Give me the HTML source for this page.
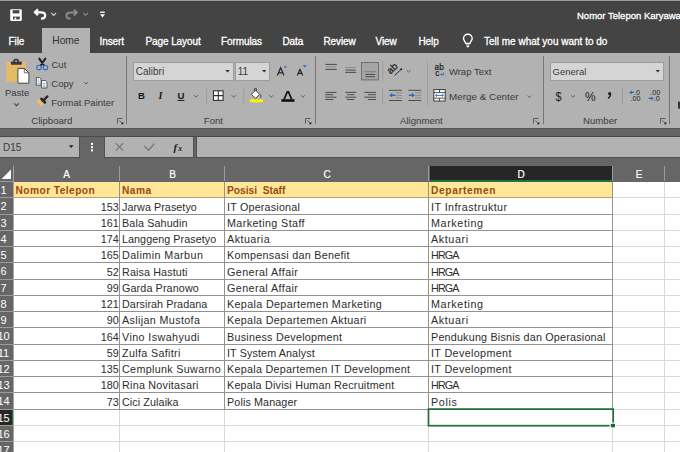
<!DOCTYPE html>
<html><head><meta charset="utf-8"><style>
html,body{margin:0;padding:0;width:680px;height:452px;overflow:hidden;background:#444;}
.r{position:absolute;}
.t{position:absolute;white-space:pre;line-height:1;font-family:"Liberation Sans", sans-serif;}
</style></head><body>
<div class="r" style="left:0px;top:0px;width:680px;height:52px;background:#444444;"></div><div class="r" style="left:0px;top:0px;width:680px;height:1px;background:#9c9c9c;"></div><div class="r" style="left:0px;top:1px;width:680px;height:1px;background:#3c3c3c;"></div><div class="t" style="left:577.00px;top:10.56px;font-size:9.5px;color:#ffffff;font-weight:400;-webkit-text-stroke:0.3px #fff;">Nomor Telepon Karyawan - Excel</div><div class="r" style="left:42px;top:28px;width:48px;height:25px;background:#b2b2b2;"></div><div class="t" style="left:8.50px;top:36.83px;font-size:10px;color:#ffffff;font-weight:400;letter-spacing:-0.1px;-webkit-text-stroke:0.3px #ffffff;">File</div><div class="t" style="left:52.30px;top:35.97px;font-size:10.2px;color:#333333;font-weight:400;">Home</div><div class="t" style="left:99.50px;top:36.83px;font-size:10px;color:#ffffff;font-weight:400;letter-spacing:-0.1px;-webkit-text-stroke:0.3px #ffffff;">Insert</div><div class="t" style="left:145.50px;top:36.83px;font-size:10px;color:#ffffff;font-weight:400;letter-spacing:-0.1px;-webkit-text-stroke:0.3px #ffffff;">Page Layout</div><div class="t" style="left:221.00px;top:36.83px;font-size:10px;color:#ffffff;font-weight:400;letter-spacing:-0.1px;-webkit-text-stroke:0.3px #ffffff;">Formulas</div><div class="t" style="left:282.50px;top:36.83px;font-size:10px;color:#ffffff;font-weight:400;letter-spacing:-0.1px;-webkit-text-stroke:0.3px #ffffff;">Data</div><div class="t" style="left:323.50px;top:36.83px;font-size:10px;color:#ffffff;font-weight:400;letter-spacing:-0.1px;-webkit-text-stroke:0.3px #ffffff;">Review</div><div class="t" style="left:375.50px;top:36.83px;font-size:10px;color:#ffffff;font-weight:400;letter-spacing:-0.1px;-webkit-text-stroke:0.3px #ffffff;">View</div><div class="t" style="left:418.50px;top:36.83px;font-size:10px;color:#ffffff;font-weight:400;letter-spacing:-0.1px;-webkit-text-stroke:0.3px #ffffff;">Help</div><div class="t" style="left:484.00px;top:36.83px;font-size:10px;color:#ffffff;font-weight:400;-webkit-text-stroke:0.3px #ffffff;">Tell me what you want to do</div><div class="r" style="left:0px;top:53px;width:680px;height:75px;background:#b2b2b2;"></div><div class="r" style="left:0px;top:128px;width:680px;height:1px;background:#575757;"></div><div class="r" style="left:0px;top:129px;width:680px;height:7px;background:#666666;"></div><div class="r" style="left:0px;top:136px;width:680px;height:1px;background:#4a4a4a;"></div><div class="r" style="left:126px;top:56px;width:1px;height:68px;background:#767676;"></div><div class="r" style="left:315px;top:56px;width:1px;height:68px;background:#767676;"></div><div class="r" style="left:543px;top:56px;width:1px;height:68px;background:#767676;"></div><div class="r" style="left:669px;top:56px;width:1px;height:68px;background:#767676;"></div><div class="t" style="left:31.30px;top:116.17px;font-size:9.6px;color:#3a3a3a;font-weight:400;">Clipboard</div><div class="t" style="left:203.80px;top:116.17px;font-size:9.6px;color:#3a3a3a;font-weight:400;">Font</div><div class="t" style="left:400.10px;top:116.17px;font-size:9.6px;color:#3a3a3a;font-weight:400;">Alignment</div><div class="t" style="left:583.10px;top:116.17px;font-size:9.6px;color:#3a3a3a;font-weight:400;">Number</div><div class="t" style="left:5.00px;top:87.96px;font-size:9.5px;color:#3a3a3a;font-weight:400;">Paste</div><div class="t" style="left:51.50px;top:60.16px;font-size:9.5px;color:#3a3a3a;font-weight:400;">Cut</div><div class="t" style="left:51.30px;top:79.46px;font-size:9.5px;color:#3a3a3a;font-weight:400;">Copy</div><div class="t" style="left:51.30px;top:97.86px;font-size:9.5px;color:#3a3a3a;font-weight:400;">Format Painter</div><div class="r" style="left:133px;top:62px;width:101px;height:19px;background:#d5d5d5;border:1px solid #9c9c9c;box-sizing:border-box;"></div><div class="t" style="left:135.80px;top:67.13px;font-size:10px;color:#3a3a3a;font-weight:400;">Calibri</div><div class="r" style="left:235px;top:62px;width:35px;height:19px;background:#d5d5d5;border:1px solid #9c9c9c;box-sizing:border-box;"></div><div class="t" style="left:237.80px;top:67.13px;font-size:10px;color:#3a3a3a;font-weight:400;">11</div><div class="r" style="left:550px;top:62px;width:114px;height:19px;background:#d5d5d5;border:1px solid #9c9c9c;box-sizing:border-box;"></div><div class="t" style="left:552.50px;top:67.16px;font-size:9.5px;color:#3a3a3a;font-weight:400;">General</div><div class="t" style="left:448.90px;top:66.76px;font-size:9.5px;color:#3a3a3a;font-weight:400;">Wrap Text</div><div class="t" style="left:449.10px;top:92.06px;font-size:9.85px;color:#3a3a3a;font-weight:400;">Merge &amp; Center</div><div class="r" style="left:0px;top:137px;width:680px;height:29px;background:#666666;"></div><div class="r" style="left:0px;top:137px;width:80px;height:21px;background:#b2b2b2;border-right:1px solid #505050;border-bottom:1px solid #505050;box-sizing:border-box;"></div><div class="t" style="left:3.00px;top:143.34px;font-size:10px;color:#3a3a3a;font-weight:400;">D15</div><div class="r" style="left:104px;top:137px;width:90px;height:21px;background:#b2b2b2;border:1px solid #505050;border-top:none;box-sizing:border-box;"></div><div class="r" style="left:196px;top:137px;width:484px;height:21px;background:#b2b2b2;border-left:1px solid #505050;border-bottom:1px solid #505050;box-sizing:border-box;"></div><div class="r" style="left:0px;top:166px;width:680px;height:16px;background:#666666;"></div><div class="r" style="left:430px;top:166px;width:183px;height:14px;background:#262626;"></div><div class="r" style="left:430px;top:180px;width:183px;height:2px;background:#217346;"></div><div class="r" style="left:13px;top:166px;width:1px;height:15px;background:#9b9b9b;"></div><div class="r" style="left:119px;top:166px;width:1px;height:15px;background:#9b9b9b;"></div><div class="r" style="left:224px;top:166px;width:1px;height:15px;background:#9b9b9b;"></div><div class="r" style="left:428px;top:166px;width:1px;height:15px;background:#9b9b9b;"></div><div class="r" style="left:612px;top:166px;width:1px;height:15px;background:#9b9b9b;"></div><div class="r" style="left:664px;top:166px;width:1px;height:15px;background:#9b9b9b;"></div><div class="t" style="left:56.5px;width:20px;text-align:center;top:168.5px;font-size:10px;color:#ffffff;line-height:12px;-webkit-text-stroke:0.2px #fff;">A</div><div class="t" style="left:162.5px;width:20px;text-align:center;top:168.5px;font-size:10px;color:#ffffff;line-height:12px;-webkit-text-stroke:0.2px #fff;">B</div><div class="t" style="left:317px;width:20px;text-align:center;top:168.5px;font-size:10px;color:#ffffff;line-height:12px;-webkit-text-stroke:0.2px #fff;">C</div><div class="t" style="left:511px;width:20px;text-align:center;top:168.5px;font-size:10px;color:#ffffff;line-height:12px;-webkit-text-stroke:0.2px #fff;">D</div><div class="t" style="left:629px;width:20px;text-align:center;top:168.5px;font-size:10px;color:#ffffff;line-height:12px;-webkit-text-stroke:0.2px #fff;">E</div><div class="r" style="left:0px;top:182px;width:680px;height:270px;background:#ffffff;"></div><div class="r" style="left:0px;top:182px;width:13px;height:270px;background:#666666;"></div><div class="r" style="left:13px;top:197px;width:667px;height:1px;background:#d9d9d9;"></div><div class="r" style="left:0px;top:197px;width:13px;height:1px;background:#9b9b9b;"></div><div class="r" style="left:13px;top:214px;width:667px;height:1px;background:#d9d9d9;"></div><div class="r" style="left:0px;top:214px;width:13px;height:1px;background:#9b9b9b;"></div><div class="r" style="left:13px;top:230px;width:667px;height:1px;background:#d9d9d9;"></div><div class="r" style="left:0px;top:230px;width:13px;height:1px;background:#9b9b9b;"></div><div class="r" style="left:13px;top:246px;width:667px;height:1px;background:#d9d9d9;"></div><div class="r" style="left:0px;top:246px;width:13px;height:1px;background:#9b9b9b;"></div><div class="r" style="left:13px;top:262px;width:667px;height:1px;background:#d9d9d9;"></div><div class="r" style="left:0px;top:262px;width:13px;height:1px;background:#9b9b9b;"></div><div class="r" style="left:13px;top:279px;width:667px;height:1px;background:#d9d9d9;"></div><div class="r" style="left:0px;top:279px;width:13px;height:1px;background:#9b9b9b;"></div><div class="r" style="left:13px;top:295px;width:667px;height:1px;background:#d9d9d9;"></div><div class="r" style="left:0px;top:295px;width:13px;height:1px;background:#9b9b9b;"></div><div class="r" style="left:13px;top:311px;width:667px;height:1px;background:#d9d9d9;"></div><div class="r" style="left:0px;top:311px;width:13px;height:1px;background:#9b9b9b;"></div><div class="r" style="left:13px;top:327px;width:667px;height:1px;background:#d9d9d9;"></div><div class="r" style="left:0px;top:327px;width:13px;height:1px;background:#9b9b9b;"></div><div class="r" style="left:13px;top:344px;width:667px;height:1px;background:#d9d9d9;"></div><div class="r" style="left:0px;top:344px;width:13px;height:1px;background:#9b9b9b;"></div><div class="r" style="left:13px;top:360px;width:667px;height:1px;background:#d9d9d9;"></div><div class="r" style="left:0px;top:360px;width:13px;height:1px;background:#9b9b9b;"></div><div class="r" style="left:13px;top:376px;width:667px;height:1px;background:#d9d9d9;"></div><div class="r" style="left:0px;top:376px;width:13px;height:1px;background:#9b9b9b;"></div><div class="r" style="left:13px;top:392px;width:667px;height:1px;background:#d9d9d9;"></div><div class="r" style="left:0px;top:392px;width:13px;height:1px;background:#9b9b9b;"></div><div class="r" style="left:13px;top:409px;width:667px;height:1px;background:#d9d9d9;"></div><div class="r" style="left:0px;top:409px;width:13px;height:1px;background:#9b9b9b;"></div><div class="r" style="left:13px;top:425px;width:667px;height:1px;background:#d9d9d9;"></div><div class="r" style="left:0px;top:425px;width:13px;height:1px;background:#9b9b9b;"></div><div class="r" style="left:13px;top:441px;width:667px;height:1px;background:#d9d9d9;"></div><div class="r" style="left:0px;top:441px;width:13px;height:1px;background:#9b9b9b;"></div><div class="r" style="left:119px;top:182px;width:1px;height:270px;background:#d9d9d9;"></div><div class="r" style="left:224px;top:182px;width:1px;height:270px;background:#d9d9d9;"></div><div class="r" style="left:428px;top:182px;width:1px;height:270px;background:#d9d9d9;"></div><div class="r" style="left:612px;top:182px;width:1px;height:270px;background:#d9d9d9;"></div><div class="r" style="left:664px;top:182px;width:1px;height:270px;background:#d9d9d9;"></div><div class="r" style="left:14px;top:182px;width:599px;height:15px;background:#ffe699;"></div><div class="r" style="left:13px;top:197px;width:600px;height:1px;background:#b3a36c;"></div><div class="r" style="left:13px;top:214px;width:600px;height:1px;background:#929292;"></div><div class="r" style="left:13px;top:230px;width:600px;height:1px;background:#929292;"></div><div class="r" style="left:13px;top:246px;width:600px;height:1px;background:#929292;"></div><div class="r" style="left:13px;top:262px;width:600px;height:1px;background:#929292;"></div><div class="r" style="left:13px;top:279px;width:600px;height:1px;background:#929292;"></div><div class="r" style="left:13px;top:295px;width:600px;height:1px;background:#929292;"></div><div class="r" style="left:13px;top:311px;width:600px;height:1px;background:#929292;"></div><div class="r" style="left:13px;top:327px;width:600px;height:1px;background:#929292;"></div><div class="r" style="left:13px;top:344px;width:600px;height:1px;background:#929292;"></div><div class="r" style="left:13px;top:360px;width:600px;height:1px;background:#929292;"></div><div class="r" style="left:13px;top:376px;width:600px;height:1px;background:#929292;"></div><div class="r" style="left:13px;top:392px;width:600px;height:1px;background:#929292;"></div><div class="r" style="left:13px;top:409px;width:600px;height:1px;background:#929292;"></div><div class="r" style="left:119px;top:182px;width:1px;height:228px;background:#929292;"></div><div class="r" style="left:224px;top:182px;width:1px;height:228px;background:#929292;"></div><div class="r" style="left:428px;top:182px;width:1px;height:228px;background:#929292;"></div><div class="r" style="left:612px;top:182px;width:1px;height:228px;background:#929292;"></div><div class="r" style="left:13px;top:166px;width:1px;height:286px;background:#a5a5a5;"></div><div class="r" style="left:0px;top:181px;width:13px;height:1px;background:#9b9b9b;"></div><div class="r" style="left:0px;top:410px;width:12px;height:15px;background:#262626;"></div><div class="r" style="left:12px;top:410px;width:1px;height:15px;background:#217346;"></div><div class="t" style="left:-6.5px;width:20px;text-align:center;top:183.6px;font-size:11px;color:#ffffff;line-height:13px;">1</div><div class="t" style="left:-6.5px;width:20px;text-align:center;top:199.6px;font-size:11px;color:#ffffff;line-height:13px;">2</div><div class="t" style="left:-6.5px;width:20px;text-align:center;top:216.6px;font-size:11px;color:#ffffff;line-height:13px;">3</div><div class="t" style="left:-6.5px;width:20px;text-align:center;top:232.6px;font-size:11px;color:#ffffff;line-height:13px;">4</div><div class="t" style="left:-6.5px;width:20px;text-align:center;top:248.6px;font-size:11px;color:#ffffff;line-height:13px;">5</div><div class="t" style="left:-6.5px;width:20px;text-align:center;top:264.6px;font-size:11px;color:#ffffff;line-height:13px;">6</div><div class="t" style="left:-6.5px;width:20px;text-align:center;top:281.6px;font-size:11px;color:#ffffff;line-height:13px;">7</div><div class="t" style="left:-6.5px;width:20px;text-align:center;top:297.6px;font-size:11px;color:#ffffff;line-height:13px;">8</div><div class="t" style="left:-6.5px;width:20px;text-align:center;top:313.6px;font-size:11px;color:#ffffff;line-height:13px;">9</div><div class="t" style="left:-6.5px;width:20px;text-align:center;top:329.6px;font-size:11px;color:#ffffff;line-height:13px;">10</div><div class="t" style="left:-6.5px;width:20px;text-align:center;top:346.6px;font-size:11px;color:#ffffff;line-height:13px;">11</div><div class="t" style="left:-6.5px;width:20px;text-align:center;top:362.6px;font-size:11px;color:#ffffff;line-height:13px;">12</div><div class="t" style="left:-6.5px;width:20px;text-align:center;top:378.6px;font-size:11px;color:#ffffff;line-height:13px;">13</div><div class="t" style="left:-6.5px;width:20px;text-align:center;top:394.6px;font-size:11px;color:#ffffff;line-height:13px;">14</div><div class="t" style="left:-6.5px;width:20px;text-align:center;top:411.6px;font-size:11px;color:#ffffff;line-height:13px;">15</div><div class="t" style="left:-6.5px;width:20px;text-align:center;top:427.6px;font-size:11px;color:#ffffff;line-height:13px;">16</div><div class="t" style="left:-6.5px;width:20px;text-align:center;top:443.6px;font-size:11px;color:#ffffff;line-height:13px;">17</div><div class="t" style="left:15.50px;top:185.97px;font-size:10.2px;color:#964a10;font-weight:700;letter-spacing:0.442px;">Nomor Telepon</div><div class="t" style="left:122.00px;top:185.97px;font-size:10.2px;color:#964a10;font-weight:700;letter-spacing:0.433px;">Nama</div><div class="t" style="left:227.00px;top:185.97px;font-size:10.2px;color:#964a10;font-weight:700;letter-spacing:0.008px;">Posisi&nbsp; Staff</div><div class="t" style="left:431.00px;top:185.97px;font-size:10.2px;color:#964a10;font-weight:700;letter-spacing:0.633px;">Departemen</div><div class="t" style="left:61px;width:57.8px;text-align:right;top:202.29px;font-size:10.75px;color:#2c2c2c;">153</div><div class="t" style="left:122.00px;top:202.30px;font-size:10.75px;color:#2c2c2c;font-weight:400;letter-spacing:0.054px;">Jarwa Prasetyo</div><div class="t" style="left:227.00px;top:202.30px;font-size:10.75px;color:#2c2c2c;font-weight:400;letter-spacing:0.192px;">IT Operasional</div><div class="t" style="left:431.00px;top:202.30px;font-size:10.75px;color:#2c2c2c;font-weight:400;letter-spacing:0.427px;">IT Infrastruktur</div><div class="t" style="left:61px;width:57.8px;text-align:right;top:218.29px;font-size:10.75px;color:#2c2c2c;">161</div><div class="t" style="left:122.00px;top:218.30px;font-size:10.75px;color:#2c2c2c;font-weight:400;letter-spacing:0.136px;">Bala Sahudin</div><div class="t" style="left:227.00px;top:218.30px;font-size:10.75px;color:#2c2c2c;font-weight:400;letter-spacing:0.393px;">Marketing Staff</div><div class="t" style="left:431.00px;top:218.30px;font-size:10.75px;color:#2c2c2c;font-weight:400;letter-spacing:0.612px;">Marketing</div><div class="t" style="left:61px;width:57.8px;text-align:right;top:234.29px;font-size:10.75px;color:#2c2c2c;">174</div><div class="t" style="left:122.00px;top:234.30px;font-size:10.75px;color:#2c2c2c;font-weight:400;letter-spacing:0.056px;">Langgeng Prasetyo</div><div class="t" style="left:227.00px;top:234.30px;font-size:10.75px;color:#2c2c2c;font-weight:400;letter-spacing:0.457px;">Aktuaria</div><div class="t" style="left:431.00px;top:234.30px;font-size:10.75px;color:#2c2c2c;font-weight:400;letter-spacing:0.6px;">Aktuari</div><div class="t" style="left:61px;width:57.8px;text-align:right;top:250.29px;font-size:10.75px;color:#2c2c2c;">165</div><div class="t" style="left:122.00px;top:250.30px;font-size:10.75px;color:#2c2c2c;font-weight:400;letter-spacing:0.431px;">Dalimin Marbun</div><div class="t" style="left:227.00px;top:250.30px;font-size:10.75px;color:#2c2c2c;font-weight:400;letter-spacing:0.281px;">Kompensasi dan Benefit</div><div class="t" style="left:431.00px;top:250.30px;font-size:10.75px;color:#2c2c2c;font-weight:400;letter-spacing:-0.867px;">HRGA</div><div class="t" style="left:61px;width:57.8px;text-align:right;top:267.29px;font-size:10.75px;color:#2c2c2c;">52</div><div class="t" style="left:122.00px;top:267.30px;font-size:10.75px;color:#2c2c2c;font-weight:400;letter-spacing:0.125px;">Raisa Hastuti</div><div class="t" style="left:227.00px;top:267.30px;font-size:10.75px;color:#2c2c2c;font-weight:400;letter-spacing:0.415px;">General Affair</div><div class="t" style="left:431.00px;top:267.30px;font-size:10.75px;color:#2c2c2c;font-weight:400;letter-spacing:-0.867px;">HRGA</div><div class="t" style="left:61px;width:57.8px;text-align:right;top:283.29px;font-size:10.75px;color:#2c2c2c;">99</div><div class="t" style="left:122.00px;top:283.30px;font-size:10.75px;color:#2c2c2c;font-weight:400;letter-spacing:0.125px;">Garda Pranowo</div><div class="t" style="left:227.00px;top:283.30px;font-size:10.75px;color:#2c2c2c;font-weight:400;letter-spacing:0.415px;">General Affair</div><div class="t" style="left:431.00px;top:283.30px;font-size:10.75px;color:#2c2c2c;font-weight:400;letter-spacing:-0.867px;">HRGA</div><div class="t" style="left:61px;width:57.8px;text-align:right;top:299.29px;font-size:10.75px;color:#2c2c2c;">121</div><div class="t" style="left:122.00px;top:299.30px;font-size:10.75px;color:#2c2c2c;font-weight:400;letter-spacing:0.067px;">Darsirah Pradana</div><div class="t" style="left:227.00px;top:299.30px;font-size:10.75px;color:#2c2c2c;font-weight:400;letter-spacing:0.346px;">Kepala Departemen Marketing</div><div class="t" style="left:431.00px;top:299.30px;font-size:10.75px;color:#2c2c2c;font-weight:400;letter-spacing:0.612px;">Marketing</div><div class="t" style="left:61px;width:57.8px;text-align:right;top:315.29px;font-size:10.75px;color:#2c2c2c;">90</div><div class="t" style="left:122.00px;top:315.30px;font-size:10.75px;color:#2c2c2c;font-weight:400;letter-spacing:0.357px;">Aslijan Mustofa</div><div class="t" style="left:227.00px;top:315.30px;font-size:10.75px;color:#2c2c2c;font-weight:400;letter-spacing:0.321px;">Kepala Departemen Aktuari</div><div class="t" style="left:431.00px;top:315.30px;font-size:10.75px;color:#2c2c2c;font-weight:400;letter-spacing:0.6px;">Aktuari</div><div class="t" style="left:61px;width:57.8px;text-align:right;top:332.29px;font-size:10.75px;color:#2c2c2c;">164</div><div class="t" style="left:122.00px;top:332.30px;font-size:10.75px;color:#2c2c2c;font-weight:400;letter-spacing:0.408px;">Vino Iswahyudi</div><div class="t" style="left:227.00px;top:332.30px;font-size:10.75px;color:#2c2c2c;font-weight:400;letter-spacing:0.268px;">Business Development</div><div class="t" style="left:431.00px;top:332.30px;font-size:10.75px;color:#2c2c2c;font-weight:400;letter-spacing:0.206px;">Pendukung Bisnis dan Operasional</div><div class="t" style="left:61px;width:57.8px;text-align:right;top:348.29px;font-size:10.75px;color:#2c2c2c;">59</div><div class="t" style="left:122.00px;top:348.30px;font-size:10.75px;color:#2c2c2c;font-weight:400;letter-spacing:0.333px;">Zulfa Safitri</div><div class="t" style="left:227.00px;top:348.30px;font-size:10.75px;color:#2c2c2c;font-weight:400;letter-spacing:0.113px;">IT System Analyst</div><div class="t" style="left:431.00px;top:348.30px;font-size:10.75px;color:#2c2c2c;font-weight:400;letter-spacing:0.362px;">IT Development</div><div class="t" style="left:61px;width:57.8px;text-align:right;top:364.29px;font-size:10.75px;color:#2c2c2c;">135</div><div class="t" style="left:122.00px;top:364.30px;font-size:10.75px;color:#2c2c2c;font-weight:400;letter-spacing:0.32px;">Cemplunk Suwarno</div><div class="t" style="left:227.00px;top:364.30px;font-size:10.75px;color:#2c2c2c;font-weight:400;letter-spacing:0.284px;">Kepala Departemen IT Development</div><div class="t" style="left:431.00px;top:364.30px;font-size:10.75px;color:#2c2c2c;font-weight:400;letter-spacing:0.362px;">IT Development</div><div class="t" style="left:61px;width:57.8px;text-align:right;top:380.29px;font-size:10.75px;color:#2c2c2c;">180</div><div class="t" style="left:122.00px;top:380.30px;font-size:10.75px;color:#2c2c2c;font-weight:400;letter-spacing:0.25px;">Rina Novitasari</div><div class="t" style="left:227.00px;top:380.30px;font-size:10.75px;color:#2c2c2c;font-weight:400;letter-spacing:0.217px;">Kepala Divisi Human Recruitment</div><div class="t" style="left:431.00px;top:380.30px;font-size:10.75px;color:#2c2c2c;font-weight:400;letter-spacing:-0.867px;">HRGA</div><div class="t" style="left:61px;width:57.8px;text-align:right;top:397.29px;font-size:10.75px;color:#2c2c2c;">73</div><div class="t" style="left:122.00px;top:397.30px;font-size:10.75px;color:#2c2c2c;font-weight:400;letter-spacing:0.091px;">Cici Zulaika</div><div class="t" style="left:227.00px;top:397.30px;font-size:10.75px;color:#2c2c2c;font-weight:400;letter-spacing:0.117px;">Polis Manager</div><div class="t" style="left:431.00px;top:397.30px;font-size:10.75px;color:#2c2c2c;font-weight:400;letter-spacing:0.625px;">Polis</div>
<svg width="680" height="452" style="position:absolute;left:0;top:0"><rect x="10.2" y="9.2" width="11.6" height="11.8" rx="1.2" fill="#fff"/><rect x="12.6" y="10.2" width="6.8" height="3.2" fill="#444"/><rect x="13" y="16.6" width="6.8" height="2.8" fill="#444"/><rect x="14.6" y="17.6" width="1.6" height="2" fill="#fff"/><path d="M35 12.3 H40.8 C43.6 12.3 45.2 13.8 45.2 15.5 C45.2 17.3 43.4 18.6 41 18.6" fill="none" stroke="#fff" stroke-width="2.3" /><path d="M38 9.4 L35 12.3 L38 15.2" fill="none" stroke="#fff" stroke-width="2.3"/><path d="M51.3 13 L53.7 15.4 L56.1 13" fill="none" stroke="#d0d0d0" stroke-width="1.1"/><path d="M77 12.6 H71 C68.2 12.6 66.4 14 66.4 15.7 C66.4 17.5 68.2 18.6 70.6 18.6" fill="none" stroke="#8a8a8a" stroke-width="2"/><path d="M73.8 9.6 L76.8 12.6 L73.8 15.4" fill="none" stroke="#8a8a8a" stroke-width="2"/><path d="M83.3 13 L85.6 15.3 L87.9 13" fill="none" stroke="#8c8c8c" stroke-width="1.1"/><rect x="100.2" y="11.6" width="4.6" height="1.3" fill="#fff"/><path d="M100 14.2 H105 L102.5 17.6 Z" fill="#fff"/><path d="M465.6 43.4 C465.4 41.4 463.5 40.2 463.5 38.6 A4.35 4.35 0 0 1 472.2 38.6 C472.2 40.2 470.2 41.4 470 43.4 Z" fill="none" stroke="#fff" stroke-width="1.4"/><path d="M466 45 H469.6 M466.6 46.6 H469" stroke="#fff" stroke-width="1.2"/><rect x="6.4" y="62" width="19.3" height="19.8" fill="#e7bb66"/><rect x="10.9" y="61.4" width="10.9" height="3.4" rx="0.8" fill="#3a3a3a"/><path d="M13.4 62 V60.6 Q13.4 58.8 15.2 58.8 H17 Q18.8 58.8 18.8 60.6 V62 Z" fill="#3a3a3a"/><rect x="15.3" y="60.4" width="1.6" height="1.5" fill="#bdbdbd"/><path d="M17.9 68.4 H24.3 L28.9 72.8 V83.2 H17.9 Z" fill="#fff" stroke="#454545" stroke-width="1"/><path d="M24.3 68.4 V72.8 H28.9" fill="none" stroke="#454545" stroke-width="0.8"/><path d="M14.4 103.4 L16.6 105.6 L18.8 103.4" fill="none" stroke="#444" stroke-width="1.1"/><path d="M39.3 58.6 L43.8 65.2 M45.3 58.6 L40.8 65.2" stroke="#222" stroke-width="2" stroke-linecap="round"/><circle cx="39" cy="67.6" r="2.3" fill="none" stroke="#3b6fb4" stroke-width="1.1"/><circle cx="45.4" cy="67.6" r="2.3" fill="none" stroke="#3b6fb4" stroke-width="1.1"/><path d="M36.3 77.7 H39.6 L41 79.1 V85.2 H36.3 Z" fill="#fff" stroke="#4a4a4a" stroke-width="0.9"/><path d="M41.6 80.5 H45.3 L47 82.2 V88 H41.6 Z" fill="#fff" stroke="#4a4a4a" stroke-width="0.9"/><path d="M37.6 80 H39.2 M37.6 81.8 H39.5 M37.6 83.5 H39.5 M43 83.5 H45.5 M43 85.2 H45.5 M43 86.8 H45.5" stroke="#5b86c4" stroke-width="0.7"/><path d="M84.4 82.2 L86.2 84 L88 82.2" fill="none" stroke="#444" stroke-width="0.9"/><path d="M36.4 101.3 L39.4 99.2 L44.2 103.6 L41.2 106.8 Z" fill="#efbd63"/><path d="M41.6 99 L44.8 102.2" stroke="#2a2a2a" stroke-width="3" stroke-linecap="round"/><path d="M44.2 99.6 L47.4 96.4" stroke="#2a2a2a" stroke-width="2.2" stroke-linecap="round"/><path d="M117.5 123.5 V118.5 H122.5" fill="none" stroke="#5a5a5a" stroke-width="1"/><path d="M119.3 120.3 L122.7 123.7" fill="none" stroke="#555" stroke-width="0.9"/><path d="M123.3 121.7 V124.3 H120.7 Z" fill="#222"/><path d="M305.5 123.5 V118.5 H310.5" fill="none" stroke="#5a5a5a" stroke-width="1"/><path d="M307.3 120.3 L310.7 123.7" fill="none" stroke="#555" stroke-width="0.9"/><path d="M311.3 121.7 V124.3 H308.7 Z" fill="#222"/><path d="M533.5 123.5 V118.5 H538.5" fill="none" stroke="#5a5a5a" stroke-width="1"/><path d="M535.3 120.3 L538.7 123.7" fill="none" stroke="#555" stroke-width="0.9"/><path d="M539.3 121.7 V124.3 H536.7 Z" fill="#222"/><path d="M660.5 123.5 V118.5 H665.5" fill="none" stroke="#5a5a5a" stroke-width="1"/><path d="M662.3 120.3 L665.7 123.7" fill="none" stroke="#555" stroke-width="0.9"/><path d="M666.3 121.7 V124.3 H663.7 Z" fill="#222"/><path d="M225.4 70 H229.79999999999998 L227.6 72.4 Z" fill="#333"/><path d="M262.0 70 H266.4 L264.2 72.4 Z" fill="#333"/><path d="M277.3 75.6 L280.6 67.8 L284 75.6 M278.5 72.8 H282.8" fill="none" stroke="#222" stroke-width="1.2"/><path d="M283.6 67.4 L285.2 65.6 L286.8 67.4 Z" fill="#2b6bc0"/><path d="M297.2 75.6 L300 69.4 L302.8 75.6 M298.2 73.4 H301.8" fill="none" stroke="#222" stroke-width="1.1"/><path d="M302.6 65.2 H307 L304.8 67.6 Z" fill="#2b6bc0"/><text x="138" y="99.2" font-family="Liberation Sans" font-weight="700" font-size="9.6" fill="#1a1a1a">B</text><text x="158.4" y="99.2" font-family="Liberation Serif" font-style="italic" font-weight="700" font-size="10.2" fill="#1a1a1a">I</text><text x="177.4" y="99" font-family="Liberation Sans" font-weight="700" font-size="9.6" fill="#1a1a1a">U</text><rect x="177.6" y="100" width="6.8" height="1" fill="#222"/><path d="M194.2 95.2 L196.2 97.2 L198.2 95.2" fill="none" stroke="#555" stroke-width="0.9"/><path d="M231.6 95.2 L233.6 97.2 L235.6 95.2" fill="none" stroke="#555" stroke-width="0.9"/><path d="M269.2 95.2 L271.2 97.2 L273.2 95.2" fill="none" stroke="#555" stroke-width="0.9"/><path d="M301 95.2 L303 97.2 L305 95.2" fill="none" stroke="#555" stroke-width="0.9"/><rect x="206.3" y="88.6" width="0.9" height="16" fill="#9a9a9a"/><rect x="243.3" y="88.6" width="0.9" height="16" fill="#9a9a9a"/><rect x="213.5" y="90.8" width="9.6" height="9.6" fill="#fff" stroke="#333" stroke-width="1.1"/><path d="M218.3 90.8 V100.4 M213.5 95.6 H223.1" stroke="#333" stroke-width="1.1"/><path d="M251.4 94.3 L255.5 90.2 L259.6 94.3 L255.5 98.4 Z" fill="#fff" stroke="#333" stroke-width="0.9"/><path d="M254.5 91.2 V88.6 H256.4 V91" fill="none" stroke="#333" stroke-width="0.8"/><path d="M260.2 93.4 Q262.8 95.6 260.4 98.6 Z" fill="#2466c0"/><rect x="249.8" y="99.3" width="13.2" height="3" fill="#fff200"/><path d="M283.2 99.2 L286.8 91 H289 L292.6 99.2 H290.8 L287.9 92.8 L285 99.2 Z" fill="#111"/><rect x="281.4" y="99.2" width="13.1" height="2.6" fill="#111"/><rect x="325.4" y="63.90" width="11.40" height="1" fill="#4a4a4a"/><rect x="325.4" y="68.90" width="11.40" height="1" fill="#4a4a4a"/><rect x="326" y="66.40" width="10.20" height="1" fill="#8a8a8a"/><rect x="345.2" y="67.10" width="11.00" height="1" fill="#8a8a8a"/><rect x="345.6" y="69.60" width="10.00" height="1" fill="#4a4a4a"/><rect x="345.2" y="71.90" width="11.00" height="1" fill="#4a4a4a"/><rect x="361.5" y="62.5" width="17" height="17.4" fill="#a5a5a5" stroke="#6e6e6e" stroke-width="1"/><rect x="364.6" y="71.20" width="11.20" height="1" fill="#7a7a7a"/><rect x="365.4" y="73.90" width="9.60" height="1" fill="#4a4a4a"/><rect x="365.4" y="76.20" width="9.60" height="1" fill="#4a4a4a"/><rect x="382.3" y="61" width="0.9" height="19.6" fill="#9a9a9a"/><rect x="325.2" y="91.90" width="11.40" height="1" fill="#4d4d4d"/><rect x="345.2" y="91.90" width="11.00" height="1" fill="#4d4d4d"/><rect x="364.4" y="91.90" width="11.60" height="1" fill="#4d4d4d"/><rect x="325.2" y="94.20" width="8.00" height="1" fill="#4d4d4d"/><rect x="347" y="94.20" width="7.20" height="1" fill="#4d4d4d"/><rect x="368" y="94.20" width="8.00" height="1" fill="#4d4d4d"/><rect x="325.2" y="96.70" width="11.40" height="1" fill="#4d4d4d"/><rect x="345.2" y="96.70" width="11.00" height="1" fill="#4d4d4d"/><rect x="364.4" y="96.70" width="11.60" height="1" fill="#4d4d4d"/><rect x="325.2" y="99.00" width="8.00" height="1" fill="#4d4d4d"/><rect x="347" y="99.00" width="7.20" height="1" fill="#4d4d4d"/><rect x="368" y="99.00" width="8.00" height="1" fill="#4d4d4d"/><rect x="382.3" y="88.2" width="0.9" height="16.2" fill="#9a9a9a"/><text x="0" y="0" transform="translate(390.6 74.6) rotate(-45)" font-family="Liberation Sans" font-size="9.8" fill="#1e1e1e" stroke="#1e1e1e" stroke-width="0.25">ab</text><path d="M394.6 75.6 L401 69.4" stroke="#222" stroke-width="1"/><circle cx="401.2" cy="69.2" r="1" fill="#222"/><path d="M406.6 70.2 L408.5 72 L410.4 70.2" fill="none" stroke="#555" stroke-width="0.9"/><rect x="389" y="89.8" width="12.8" height="1" fill="#4d4d4d"/><rect x="389" y="100" width="12.8" height="1" fill="#4d4d4d"/><rect x="395.6" y="92.4" width="6.2" height="1" fill="#8c8c8c"/><rect x="395.6" y="94.9" width="6.2" height="1" fill="#8c8c8c"/><rect x="395.6" y="97.4" width="6.2" height="1" fill="#8c8c8c"/><path d="M389.4 95.3 L392.2 93 V94.6 H395.2 V96 H392.2 V97.6 Z" fill="#2466c0"/><rect x="408.4" y="89.8" width="12.8" height="1" fill="#4d4d4d"/><rect x="408.4" y="100" width="12.8" height="1" fill="#4d4d4d"/><rect x="415.0" y="92.4" width="6.2" height="1" fill="#8c8c8c"/><rect x="415.0" y="94.9" width="6.2" height="1" fill="#8c8c8c"/><rect x="415.0" y="97.4" width="6.2" height="1" fill="#8c8c8c"/><path d="M414.79999999999995 95.3 L412.0 93 V94.6 H408.79999999999995 V96 H412.0 V97.6 Z" fill="#2466c0"/><rect x="427" y="61.2" width="0.9" height="44" fill="#9a9a9a"/><text x="434.6" y="70" font-family="Liberation Sans" font-size="8.2" fill="#1e1e1e" stroke="#1e1e1e" stroke-width="0.2">ab</text><text x="435.2" y="75.8" font-family="Liberation Sans" font-size="8.2" fill="#1e1e1e" stroke="#1e1e1e" stroke-width="0.2">c</text><path d="M443.6 72.6 V74.6 H440.8 M441.8 73.6 L440.8 74.6 L441.8 75.6" fill="none" stroke="#2466c0" stroke-width="0.9"/><rect x="433.8" y="89.6" width="11.4" height="11.4" fill="#fff" stroke="#3a3a3a" stroke-width="1"/><path d="M433.8 92.6 H445.2 M433.8 98.2 H445.2 M439.5 89.6 V92.6 M439.5 98.2 V101" stroke="#3a3a3a" stroke-width="0.9"/><path d="M435.6 95.4 H443.4" stroke="#2466c0" stroke-width="0.9"/><path d="M437 94.2 L435.6 95.4 L437 96.6 M442 94.2 L443.4 95.4 L442 96.6" fill="none" stroke="#2466c0" stroke-width="0.9"/><path d="M527.6 95.6 L529.5 97.4 L531.4 95.6" fill="none" stroke="#555" stroke-width="0.9"/><path d="M655.6 70 H660 L657.8 72.4 Z" fill="#333"/><text x="0" y="0" transform="translate(555.6 100.8) scale(0.82 1)" font-family="Liberation Sans" font-size="13.4" fill="#222">$</text><path d="M571 95.4 L573 97.2 L575 95.4" fill="none" stroke="#555" stroke-width="0.9"/><text x="585" y="100.6" font-family="Liberation Sans" font-size="12" fill="#222">%</text><circle cx="609.6" cy="93.6" r="1.6" fill="#222"/><path d="M610.6 93.8 Q610.8 96.6 608 98.4" fill="none" stroke="#222" stroke-width="1.3"/><rect x="622" y="88" width="0.9" height="16.4" fill="#9a9a9a"/><text x="634" y="95.2" font-family="Liberation Sans" font-size="7.2" fill="#222">.0</text><text x="630.6" y="101.2" font-family="Liberation Sans" font-size="7.2" fill="#222">.00</text><path d="M629.2 92.4 L631.6 90.4 V91.8 H634 V93 H631.6 V94.4 Z" fill="#2466c0"/><text x="650.2" y="95.2" font-family="Liberation Sans" font-size="7.2" fill="#222">.00</text><text x="653.8" y="101.2" font-family="Liberation Sans" font-size="7.2" fill="#222">.0</text><path d="M653.6 98.4 L651.2 96.4 V97.8 H648.6 V99 H651.2 V100.4 Z" fill="#2466c0"/><rect x="678" y="101.6" width="2" height="7" fill="#333"/><path d="M68.8 145.2 H73.6 L71.2 148 Z" fill="#222"/><rect x="91" y="142.9" width="2" height="2" fill="#fff"/><rect x="91" y="146.2" width="2" height="2" fill="#fff"/><rect x="91" y="149.4" width="2" height="2" fill="#fff"/><path d="M115.8 143.2 L123.2 150.6 M123.2 143.2 L115.8 150.6" stroke="#7a7a7a" stroke-width="1.3"/><path d="M144.2 146 L148.4 150.2 L154.4 143.8" fill="none" stroke="#7a7a7a" stroke-width="1.4"/><text x="173.4" y="150.6" font-family="Liberation Serif" font-style="italic" font-weight="700" font-size="11" fill="#1e1e1e">f</text><text x="178.2" y="150.6" font-family="Liberation Serif" font-style="italic" font-weight="700" font-size="7.8" fill="#1e1e1e">x</text><rect x="428.5" y="409.1" width="184.7" height="16.6" fill="none" stroke="#1e6e3c" stroke-width="1.7"/><rect x="609.6" y="422.6" width="6.2" height="5.6" fill="#fff"/><rect x="610.8" y="423.8" width="4.2" height="3.5" fill="#1d6535"/><path d="M1.6 179 L11 169.6 V179 Z" fill="#fff"/></svg>
</body></html>
